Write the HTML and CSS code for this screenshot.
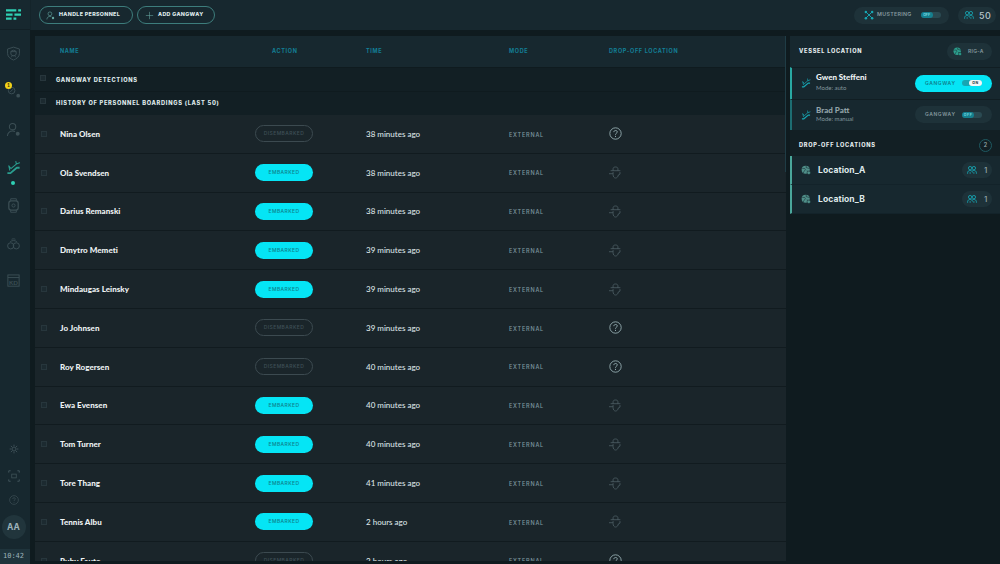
FILE: index.html
```html
<!DOCTYPE html>
<html lang="en">
<head>
<meta charset="utf-8">
<title>Gangway</title>
<link rel="stylesheet" href="styles.css">
</head>
<body>
<svg class="defs" width="0" height="0" aria-hidden="true">
  <defs>
    <symbol id="i-user" viewBox="0 0 16 16"><circle cx="7" cy="5" r="3.4" fill="none" stroke="currentColor" stroke-width="1.1"/><path d="M1.5 15c.4-3.600 2.600-5.400 5.500-5.400 1 0 1.800.2 2.600.6" fill="none" stroke="currentColor" stroke-width="1.1"/><circle cx="12.500" cy="12.500" r="2.100" fill="currentColor"/></symbol>
    <symbol id="i-gangway" viewBox="0 0 16 16"><path d="M1.500 14h3.200l6.800-5.800h3" fill="none" stroke="currentColor" stroke-width="2" stroke-linejoin="round"/><path d="M4 10.800L3 6.300M3 6.300l2.200 2.800 5.800-4.800 3.500-1.300M10.500 1.500l.5 2.800" fill="none" stroke="currentColor" stroke-width="1.100" stroke-linecap="round" stroke-linejoin="round"/></symbol>
    <symbol id="i-people" viewBox="0 0 16 16"><circle cx="5" cy="5" r="2.700" fill="none" stroke="currentColor" stroke-width="1.400"/><circle cx="11" cy="5" r="2.700" fill="none" stroke="currentColor" stroke-width="1.400"/><path d="M1 14v-1.500C1 10 2.800 8.800 5 8.800s3.500 1.200 4 3.200M8.500 9.300c.8-.4 1.600-.5 2.500-.5 2.200 0 4 1.200 4 3.700V14M5 11.500V14M11 11.500V14" fill="none" stroke="currentColor" stroke-width="1.400"/></symbol>
    <symbol id="i-globe" viewBox="0 0 16 16"><circle cx="7.500" cy="7.500" r="6.500" fill="currentColor"/><path d="M2 5.500h4l1 2-2 2.500-1.500 3M8.500 1.500l-.5 2.500 3 1 3 .5M9 9.500l2.500.5 1 2" fill="none" stroke="#16272e" stroke-width=".9"/><circle cx="12.500" cy="12.500" r="2.800" fill="currentColor" stroke="#16272e" stroke-width=".8"/></symbol>
    <symbol id="i-question" viewBox="0 0 16 16"><circle cx="8" cy="8" r="7" fill="none" stroke="currentColor" stroke-width="1"/><path d="M5.900 6.300c.1-1.300 1-2 2.200-2 1.300 0 2.100.8 2.100 1.800 0 1.500-2.200 1.600-2.200 3.400" fill="none" stroke="currentColor" stroke-width="1"/><circle cx="8" cy="11.500" r=".7" fill="currentColor"/></symbol>
    <symbol id="i-drop" viewBox="0 0 16 16"><path d="M5 5.500V3.500C5 2 6.300 1.200 8 1.200s3 .8 3 2.300v2M2.500 5.800h11M.5 9.500h4M5 8v2.500C5 13 6.300 14.800 8 14.800s3.200-1.500 3.500-3.800l2-1V8" fill="none" stroke="currentColor" stroke-width="1" stroke-linecap="round" stroke-linejoin="round"/></symbol>
  </defs>
</svg>

<div class="app">
  <aside class="rail">
    <div class="logo">
      <svg class="logo-mark" viewBox="0 0 16 11"><path d="M0 0h11v2.400H0zM13 0h3v2.400h-3zM0 4.300h7v2.400H0zM9 4.300h7v2.400H9zM0 8.600h6v2.400H0zM8 8.600h3v2.400H8z" fill="#2fd0b4"/></svg>
    </div>
    <nav class="rail-nav">
      <div class="rail-item">
        <svg class="rail-icon" viewBox="0 0 16 16"><path d="M8 1.200l6.300 2v5c0 3.200-3 5.500-6.300 6.800-3.300-1.300-6.300-3.600-6.300-6.800v-5z" fill="none" stroke="currentColor" stroke-width="1"/><circle cx="8" cy="7.500" r="3" fill="none" stroke="currentColor"/><path d="M5 6h6M5.500 12c.5-1.200 1.400-1.800 2.500-1.800s2 .6 2.500 1.800" fill="none" stroke="currentColor"/></svg>
      </div>
      <div class="rail-item">
        <span class="badge">1</span>
        <svg class="rail-icon" viewBox="0 0 16 16"><circle cx="6" cy="7" r="3.500" fill="none" stroke="currentColor"/><path d="M4.500 8.500L7.500 5.500" stroke="currentColor"/><circle cx="13" cy="12.500" r="2" fill="currentColor"/></svg>
      </div>
      <div class="rail-item"><svg class="rail-icon"><use href="#i-user"/></svg></div>
      <div class="rail-item is-active">
        <svg class="rail-icon"><use href="#i-gangway"/></svg>
        <span class="rail-dot"></span>
      </div>
      <div class="rail-item">
        <svg class="rail-icon" viewBox="0 0 16 16"><rect x="3" y="3" width="10" height="10" rx="2.500" fill="none" stroke="currentColor" stroke-width="1.300"/><path d="M5 3V.8h6V3M5 13v2.200h6V13" fill="none" stroke="currentColor"/><circle cx="8" cy="8" r="1.700" fill="none" stroke="currentColor"/></svg>
      </div>
      <div class="rail-item">
        <svg class="rail-icon" viewBox="0 0 16 16"><circle cx="5" cy="10.500" r="3.300" fill="none" stroke="currentColor"/><circle cx="11" cy="10.500" r="3.300" fill="none" stroke="currentColor"/><path d="M4.500 6c2-1.500 5-1.500 7 0M6 3.500c1.200-.6 2.800-.6 4 0" fill="none" stroke="currentColor"/></svg>
      </div>
      <div class="rail-item">
        <svg class="rail-icon" viewBox="0 0 16 16"><rect x="2" y="1" width="12" height="12" fill="none" stroke="currentColor"/><path d="M2 3.800h12" stroke="currentColor"/><text x="8" y="11.200" text-anchor="middle" class="rail-kd">KD</text></svg>
      </div>
    </nav>
    <div class="rail-bottom">
      <svg class="rail-sm sun" viewBox="0 0 16 16"><circle cx="8" cy="8" r="3.200" fill="none" stroke="currentColor" stroke-width="1.400"/><path d="M8 1v2.500M8 12.500V15M1 8h2.500M12.500 8H15M3 3l1.800 1.800M11.200 11.200L13 13M13 3l-1.800 1.800M4.800 11.200L3 13" stroke="currentColor" stroke-width="1.400"/></svg>
      <svg class="rail-sm focus" viewBox="0 0 16 16"><rect x="5" y="5.500" width="6" height="5" fill="none" stroke="currentColor"/><path d="M1 1h2.500M1 1v2.500M15 1h-2.500M15 1v2.500M1 15h2.500M1 15v-2.500M15 15h-2.500M15 15v-2.500" stroke="currentColor" stroke-width="1.300"/></svg>
      <svg class="rail-sm help"><use href="#i-question"/></svg>
      <div class="avatar">AA</div>
      <div class="clock">10:42</div>
    </div>
  </aside>

  <div class="main">
    <header class="topbar">
      <button class="pill-btn btn-handle"><svg class="btn-icon"><use href="#i-user"/></svg>HANDLE PERSONNEL</button>
      <button class="pill-btn btn-add"><svg class="btn-icon" viewBox="0 0 16 16"><path d="M8 1.500v13M1.500 8h13" stroke="currentColor"/></svg>ADD GANGWAY</button>
      <div class="topbar-right">
        <div class="chip chip-muster">
          <svg class="muster-icon" viewBox="0 0 16 16"><path d="M3 3l10 10M13 3L3 13" stroke="currentColor" stroke-width="1.500"/><circle cx="3" cy="3" r="2" fill="currentColor"/><circle cx="13" cy="3" r="2" fill="currentColor"/><circle cx="3" cy="13" r="2" fill="currentColor"/><circle cx="13" cy="13" r="2" fill="currentColor"/></svg>
          <span class="chip-label">MUSTERING</span>
          <span class="toggle toggle-off"><span class="knob">OFF</span></span>
        </div>
        <div class="chip chip-count">
          <svg class="people-icon"><use href="#i-people"/></svg>
          <span class="count">50</span>
        </div>
      </div>
    </header>

    <div class="content">
      <section class="table">
        <div class="t-head">
          <span class="c-name">NAME</span>
          <span class="c-action">ACTION</span>
          <span class="c-time">TIME</span>
          <span class="c-mode">MODE</span>
          <span class="c-drop">DROP-OFF LOCATION</span>
        </div>
        <div class="t-group"><span class="check"></span><span>GANGWAY DETECTIONS</span></div>
        <div class="t-group"><span class="check"></span><span>HISTORY OF PERSONNEL BOARDINGS (LAST 50)</span></div>

        <div class="t-row"><span class="check"></span><span class="name">Nina Olsen</span><span class="cell-action"><span class="status off">DISEMBARKED</span></span><span class="time">38 minutes ago</span><span class="mode">EXTERNAL</span><svg class="q"><use href="#i-question"/></svg></div>
        <div class="t-row"><span class="check"></span><span class="name">Ola Svendsen</span><span class="cell-action"><span class="status on">EMBARKED</span></span><span class="time">38 minutes ago</span><span class="mode">EXTERNAL</span><svg class="d"><use href="#i-drop"/></svg></div>
        <div class="t-row"><span class="check"></span><span class="name">Darius Remanski</span><span class="cell-action"><span class="status on">EMBARKED</span></span><span class="time">38 minutes ago</span><span class="mode">EXTERNAL</span><svg class="d"><use href="#i-drop"/></svg></div>
        <div class="t-row"><span class="check"></span><span class="name">Dmytro Memeti</span><span class="cell-action"><span class="status on">EMBARKED</span></span><span class="time">39 minutes ago</span><span class="mode">EXTERNAL</span><svg class="d"><use href="#i-drop"/></svg></div>
        <div class="t-row"><span class="check"></span><span class="name">Mindaugas Leinsky</span><span class="cell-action"><span class="status on">EMBARKED</span></span><span class="time">39 minutes ago</span><span class="mode">EXTERNAL</span><svg class="d"><use href="#i-drop"/></svg></div>
        <div class="t-row"><span class="check"></span><span class="name">Jo Johnsen</span><span class="cell-action"><span class="status off">DISEMBARKED</span></span><span class="time">39 minutes ago</span><span class="mode">EXTERNAL</span><svg class="q"><use href="#i-question"/></svg></div>
        <div class="t-row"><span class="check"></span><span class="name">Roy Rogersen</span><span class="cell-action"><span class="status off">DISEMBARKED</span></span><span class="time">40 minutes ago</span><span class="mode">EXTERNAL</span><svg class="q"><use href="#i-question"/></svg></div>
        <div class="t-row"><span class="check"></span><span class="name">Ewa Evensen</span><span class="cell-action"><span class="status on">EMBARKED</span></span><span class="time">40 minutes ago</span><span class="mode">EXTERNAL</span><svg class="d"><use href="#i-drop"/></svg></div>
        <div class="t-row"><span class="check"></span><span class="name">Tom Turner</span><span class="cell-action"><span class="status on">EMBARKED</span></span><span class="time">40 minutes ago</span><span class="mode">EXTERNAL</span><svg class="d"><use href="#i-drop"/></svg></div>
        <div class="t-row"><span class="check"></span><span class="name">Tore Thang</span><span class="cell-action"><span class="status on">EMBARKED</span></span><span class="time">41 minutes ago</span><span class="mode">EXTERNAL</span><svg class="d"><use href="#i-drop"/></svg></div>
        <div class="t-row"><span class="check"></span><span class="name">Tennis Albu</span><span class="cell-action"><span class="status on">EMBARKED</span></span><span class="time">2 hours ago</span><span class="mode">EXTERNAL</span><svg class="d"><use href="#i-drop"/></svg></div>
        <div class="t-row"><span class="check"></span><span class="name">Ruby Fauto</span><span class="cell-action"><span class="status off">DISEMBARKED</span></span><span class="time">2 hours ago</span><span class="mode">EXTERNAL</span><svg class="q"><use href="#i-question"/></svg></div>
        <span class="scroll-thumb"></span>
      </section>

      <aside class="panel">
        <div class="panel-head">
          <span class="panel-title">VESSEL LOCATION</span>
          <span class="rig"><svg class="rig-icon"><use href="#i-globe"/></svg>RIG-A</span>
        </div>
        <div class="vessel">
          <svg class="vessel-icon"><use href="#i-gangway"/></svg>
          <div class="vessel-text"><span class="vessel-name">Gwen Steffeni</span><span class="vessel-mode">Mode: auto</span></div>
          <span class="gw gw-on">GANGWAY<span class="toggle toggle-on"><span class="knob">ON</span></span></span>
        </div>
        <div class="vessel vessel-dim">
          <svg class="vessel-icon"><use href="#i-gangway"/></svg>
          <div class="vessel-text"><span class="vessel-name">Brad Patt</span><span class="vessel-mode">Mode: manual</span></div>
          <span class="gw gw-off">GANGWAY<span class="toggle toggle-off"><span class="knob">OFF</span></span></span>
        </div>
        <div class="drop-head">
          <span class="panel-title">DROP-OFF LOCATIONS</span>
          <span class="ring">2</span>
        </div>
        <div class="loc">
          <svg class="loc-icon"><use href="#i-globe"/></svg>
          <span class="loc-name">Location_A</span>
          <span class="loc-count"><svg class="people-icon"><use href="#i-people"/></svg>1</span>
        </div>
        <div class="loc">
          <svg class="loc-icon"><use href="#i-globe"/></svg>
          <span class="loc-name">Location_B</span>
          <span class="loc-count"><svg class="people-icon"><use href="#i-people"/></svg>1</span>
        </div>
      </aside>
    </div>
  </div>
</div>
</body>
</html>
```

FILE: styles.css
```css
* { box-sizing: border-box; }
html, body { margin: 0; height: 100%; background: #0f1b1f; overflow: hidden; }
body { font-family: "Lato", "Liberation Sans", sans-serif; color: #e8eef0; }
.defs { position: absolute; }

.app { display: flex; width: 1000px; height: 564px; overflow: hidden; }

/* Left rail */
.rail { width: 30px; flex: none; display: flex; flex-direction: column; background: #17282f; }
.logo { height: 30px; flex: none; display: flex; align-items: center; padding: 0 0 1px 6px; border-bottom: 1px solid #122026; }
.logo-mark { width: 15px; height: 11px; }
.rail-nav { display: flex; flex-direction: column; padding-top: 15px; }
.rail-item { position: relative; height: 38px; display: flex; justify-content: center; padding: 1px 3px 0 0; color: #3c4f55; }
.rail-item.is-active { color: #2a9d8f; }
.rail-icon { width: 15px; height: 15px; }
.rail-kd { font: 700 6.500px "Lato", sans-serif; fill: currentColor; }
.rail-dot { position: absolute; top: 22px; left: 11px; width: 4px; height: 4px; border-radius: 50%; background: #2fd0b4; }
.badge { position: absolute; left: 5px; top: -1px; width: 7px; height: 7px; border-radius: 50%; background: #f2d21a; color: #3a3000; font: 700 5px/7px "Lato", sans-serif; text-align: center; z-index: 1; }
.rail-bottom { margin-top: auto; display: flex; flex-direction: column; align-items: center; color: #41545a; }
.rail-sm { width: 10px; height: 10px; margin-right: 3px; }
.sun { margin-bottom: 16px; }
.focus { width: 12px; height: 12px; margin-bottom: 13px; }
.help { width: 10px; height: 10px; margin-bottom: 10px; }
.avatar { width: 24px; height: 24px; margin-right: 3px; border-radius: 50%; background: #21353c; color: #9db2b9; font: 700 8.500px/24px "Inter", sans-serif; text-align: center; }
.clock { width: 30px; height: 15px; margin-top: 10px; padding-right: 3px; background: #1f343c; color: #9db2b9; font: 400 7px/15px "DejaVu Sans Mono", monospace; text-align: center; }

/* Main column */
.main { flex: 1; min-width: 0; display: flex; flex-direction: column; }
.topbar { height: 30px; flex: none; display: flex; align-items: center; gap: 4px; padding-left: 8px; background: #17282f; border-left: 1px solid #14242a; }
.pill-btn { height: 18px; display: flex; align-items: center; gap: 4px; border: 1px solid #3d7d7c; border-radius: 9px; background: transparent; color: #dfe8ea; font: 800 5.300px/1 "Inter", sans-serif; letter-spacing: .35px; padding: 0; }
.btn-handle { width: 94px; padding-left: 6px; }
.btn-add { width: 78px; padding-left: 7px; }
.btn-icon { width: 9px; height: 9px; color: #63a49f; flex: none; }
.topbar-right { margin-left: auto; display: flex; gap: 9px; padding-right: 4px; }
.chip { height: 17px; display: flex; align-items: center; border-radius: 9px; background: #1e3239; }
.chip-muster { width: 95px; padding-left: 10px; gap: 3px; }
.muster-icon { width: 10px; height: 10px; color: #17a6b3; flex: none; }
.chip-label { font: 600 5.300px/1 "Inter", sans-serif; letter-spacing: .3px; color: #84989f; margin-right: 6px; }
.chip-count { width: 38px; padding-left: 6px; gap: 5px; }
.people-icon { width: 10px; height: 10px; color: #17a6b3; flex: none; }
.count { font: 500 9px/1 "Inter", sans-serif; color: #b7c5c9; letter-spacing: .4px; }

.toggle { width: 20px; height: 6px; border-radius: 3px; display: flex; align-items: center; background: #2b4a52; }
.knob { height: 6px; border-radius: 3px; font: 700 3.500px/6px "Inter", sans-serif; text-align: center; }
.toggle-off .knob { width: 12px; background: #15808f; color: #70d4df; }
.toggle-on { justify-content: flex-end; background: #17a6b3; width: 20px; }
.toggle-on .knob { width: 13px; background: #f2f7f8; color: #173038; }

/* Content */
.content { flex: 1; min-height: 0; display: flex; padding: 6px 0 3px 5px; }

.table { position: relative; width: 751px; flex: none; overflow: hidden; }
.t-head { height: 31px; display: grid; grid-template-columns: 212px 94px 143px 100px 1fr; padding-left: 25px; align-items: center; background: #17282f; color: #137f96; font: 700 5.500px/1 "Inter", sans-serif; letter-spacing: .65px; }
.t-group { height: 24px; display: flex; align-items: center; gap: 10px; padding: 1px 0 0 5px; background: #121f24; border-top: 1px solid #0f1b1f; color: #dfe8ea; font: 800 5.700px/1 "Inter", sans-serif; letter-spacing: .7px; }
.t-group + .t-group { padding-top: 0; padding-bottom: 1px; }
.t-group .check { margin-top: -5px; }
.check { width: 6px; height: 6px; flex: none; border: 1px solid #27363c; background: #1c2a30; }
.t-row { height: 38.8px; display: grid; grid-template-columns: 19px 195px 111px 143px 100px 1fr; align-items: center; padding-left: 6px; background: #1a252a; border-bottom: 1px solid #111b1f; }
.name { font: 900 8px/1 "Lato", sans-serif; letter-spacing: .05px; color: #eef3f4; }
.cell-action { display: flex; }
.status { width: 58px; height: 17px; border-radius: 9px; font: 500 5px/17px "Inter", sans-serif; letter-spacing: .4px; text-align: center; }
.status.on { background: #05e5f5; color: #0f7f8c; }
.status.off { border: 1px solid #3c4a50; color: #3f5057; line-height: 15px; }
.time { font: 500 8px/1 "Lato", sans-serif; color: #dbe3e6; }
.mode { padding-top: 3px; font: 500 5.500px/1 "Inter", sans-serif; letter-spacing: .8px; color: #7f9aa1; }
.q { width: 13px; height: 13px; color: #a3bcc0; }
.d { width: 13px; height: 13px; color: #4d5f65; }
.scroll-thumb { position: absolute; right: 0; top: 0; width: 1px; height: 136px; background: #1f3c45; }

/* Right panel */
.panel { flex: 1; margin-left: 4px; min-width: 0; }
.panel-head { height: 31px; display: flex; align-items: center; justify-content: space-between; padding: 0 8px 0 9px; background: #17282f; }
.panel-title { font: 800 5.600px/1 "Inter", sans-serif; letter-spacing: .75px; color: #e4ebed; }
.rig { width: 45px; height: 17px; display: flex; align-items: center; gap: 6px; padding-left: 6px; border-radius: 9px; background: #1e3239; font: 600 5px/1 "Inter", sans-serif; letter-spacing: .3px; color: #84989f; }
.rig-icon { width: 9px; height: 9px; color: #2c9d8c; flex: none; }
.vessel { height: 31.500px; display: flex; align-items: center; padding-left: 9px; padding-right: 8px; background: #17282f; border-top: 1px solid #111e23; border-left: 2px solid #29a9a3; }
.vessel-dim { border-left-color: #1d6d72; }
.vessel-icon { width: 10px; height: 10px; color: #17a6b3; flex: none; }
.vessel-text { display: flex; flex-direction: column; gap: 4px; margin-left: 5px; margin-right: auto; padding-bottom: 2px; }
.vessel-dim .vessel-text { gap: 2px; padding-bottom: 1px; }
.vessel-name { font: 900 8px/1 "Lato", sans-serif; color: #eef3f4; }
.vessel-dim .vessel-name { color: #93a4a9; }
.vessel-mode { font: 400 6px/1 "Lato", sans-serif; color: #82979d; }
.gw { width: 77px; height: 17px; display: flex; align-items: center; justify-content: space-between; padding: 0 10px; border-radius: 9px; font: 600 5px/1 "Inter", sans-serif; letter-spacing: .6px; }
.gw-on { background: #05e5f5; color: #0f7f8c; }
.gw-off { background: #1e3239; color: #84989f; }
.drop-head { height: 26px; display: flex; align-items: center; justify-content: space-between; padding: 4px 8px 0 9px; background: #121f24; }
.drop-head .panel-title { margin-top: 2px; }
.ring { width: 13px; height: 13px; border: 1px solid #1e5961; border-radius: 50%; font: 600 5.500px/11px "Inter", sans-serif; color: #90a6ac; text-align: center; }
.loc { height: 29px; display: flex; align-items: center; padding: 0 8px 0 9px; background: #17282f; border-left: 2px solid #4aa79b; border-bottom: 1px solid #13232a; }
.loc-icon { width: 10px; height: 10px; color: #4f8f89; flex: none; }
.loc-name { margin-left: 7px; margin-right: auto; font: 700 8.500px/1 "Inter", sans-serif; letter-spacing: .1px; color: #dfe8ea; }
.loc-count { width: 30px; height: 16px; display: flex; align-items: center; gap: 7px; padding-left: 5px; border-radius: 8px; background: #1e3239; font: 500 8px/1 "Inter", sans-serif; color: #93a4a9; }
```
